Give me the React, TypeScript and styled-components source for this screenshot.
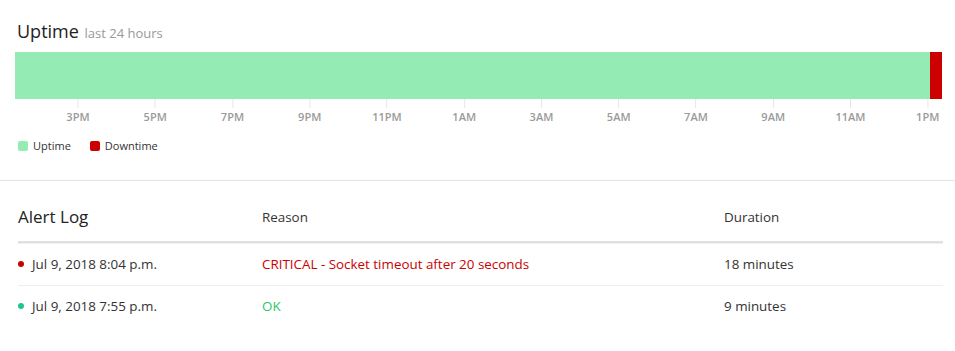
import styled, { createGlobalStyle } from "styled-components";

const GlobalStyle = createGlobalStyle`
  body {
    margin: 0;
    background: #fff;
    font-family: "Open Sans", "Liberation Sans", sans-serif;
    color: #333;
  }
`;

// hours since the left edge of the bar, 24h wide
const START_OFFSET = 1.63;
const TICKS = ["3PM", "5PM", "7PM", "9PM", "11PM", "1AM", "3AM", "5AM", "7AM", "9AM", "11AM", "1PM"];
const DOWNTIME = { from: 23.69, to: 24 };

const ALERTS = [
  { date: "Jul 9, 2018 8:04 p.m.", reason: "CRITICAL - Socket timeout after 20 seconds", duration: "18 minutes", ok: false },
  { date: "Jul 9, 2018 7:55 p.m.", reason: "OK", duration: "9 minutes", ok: true },
];

const GREEN = "#94ecb4";
const RED = "#cc0000";

const UptimeSection = styled.section`
  padding: 19px 13px 26px 15px;
  border-bottom: 1px solid #e3e3e3;
`;

const Heading = styled.h2`
  margin: 0 0 7px 2px;
  font-size: 18px;
  line-height: 24px;
  font-weight: 400;
  color: #222;
`;

const Sub = styled.span`
  font-size: 13px;
  color: #999;
  margin-left: 1px;
`;

const Bar = styled.div`
  display: flex;
  height: 47px;
  background: ${GREEN};
`;

const Segment = styled.div<{ $color: string }>`
  background: ${(p) => p.$color};
  height: 100%;
`;

const Axis = styled.div`
  position: relative;
  height: 24px;
`;

const Tick = styled.div`
  position: absolute;
  top: 0;
  display: flex;
  flex-direction: column;
  align-items: center;
  transform: translateX(-50%);
`;

const TickLine = styled.div`
  width: 1px;
  height: 9px;
  background: #e6e6e6;
`;

const TickLabel = styled.span`
  margin-top: 2px;
  font-size: 11px;
  line-height: 13px;
  font-weight: 600;
  color: #9a9a9a;
`;

const Legend = styled.div`
  display: flex;
  gap: 19px;
  margin: 15px 0 0 3px;
`;

const LegendItem = styled.div`
  display: flex;
  align-items: center;
  gap: 5px;
  font-size: 11px;
  line-height: 16px;
  color: #333;
`;

const Swatch = styled.span<{ $color: string }>`
  width: 10px;
  height: 10px;
  border-radius: 2px;
  background: ${(p) => p.$color};
`;

const LogSection = styled.section`
  padding: 0 12px 0 18px;
`;

const Row = styled.div<{ $head?: boolean }>`
  display: grid;
  grid-template-columns: 244fr 462fr 219fr;
  align-items: center;
  box-sizing: border-box;
  ${(p) =>
    p.$head
      ? `padding: 26px 0 14px; border-bottom: 2px solid #dde1e6;`
      : `height: 41px; padding-bottom: 2px; & + & { border-top: 1px solid #efefef; height: 42px; }`}
`;

const Title = styled.span`
  font-size: 17px;
  line-height: 20px;
  color: #222;
`;

const HeadCell = styled.span`
  font-size: 13.4px;
  line-height: 20px;
  color: #333;
`;

const Cell = styled.span<{ $color?: string }>`
  display: flex;
  align-items: center;
  font-size: 13.4px;
  color: ${(p) => p.$color || "#333"};
`;

const Dot = styled.span<{ $color: string }>`
  width: 6px;
  height: 6px;
  border-radius: 50%;
  background: ${(p) => p.$color};
  margin-right: 8px;
`;

export default function App() {
  const pct = (h: number) => `${(h / 24) * 100}%`;
  return (
    <>
      <GlobalStyle />
      <UptimeSection>
        <Heading>
          Uptime <Sub>last 24 hours</Sub>
        </Heading>
        <Bar>
          <Segment $color={GREEN} style={{ width: pct(DOWNTIME.from) }} />
          <Segment $color={RED} style={{ width: pct(DOWNTIME.to - DOWNTIME.from) }} />
        </Bar>
        <Axis>
          {TICKS.map((t, i) => (
            <Tick key={t} style={{ left: pct(START_OFFSET + i * 2) }}>
              <TickLine />
              <TickLabel>{t}</TickLabel>
            </Tick>
          ))}
        </Axis>
        <Legend>
          <LegendItem>
            <Swatch $color={GREEN} />
            Uptime
          </LegendItem>
          <LegendItem>
            <Swatch $color={RED} />
            Downtime
          </LegendItem>
        </Legend>
      </UptimeSection>
      <LogSection>
        <Row $head>
          <Title>Alert Log</Title>
          <HeadCell>Reason</HeadCell>
          <HeadCell>Duration</HeadCell>
        </Row>
        {ALERTS.map((a) => (
          <Row key={a.date}>
            <Cell>
              <Dot $color={a.ok ? "#1dc98a" : RED} />
              {a.date}
            </Cell>
            <Cell $color={a.ok ? "#2fc46a" : RED}>{a.reason}</Cell>
            <Cell>{a.duration}</Cell>
          </Row>
        ))}
      </LogSection>
    </>
  );
}
